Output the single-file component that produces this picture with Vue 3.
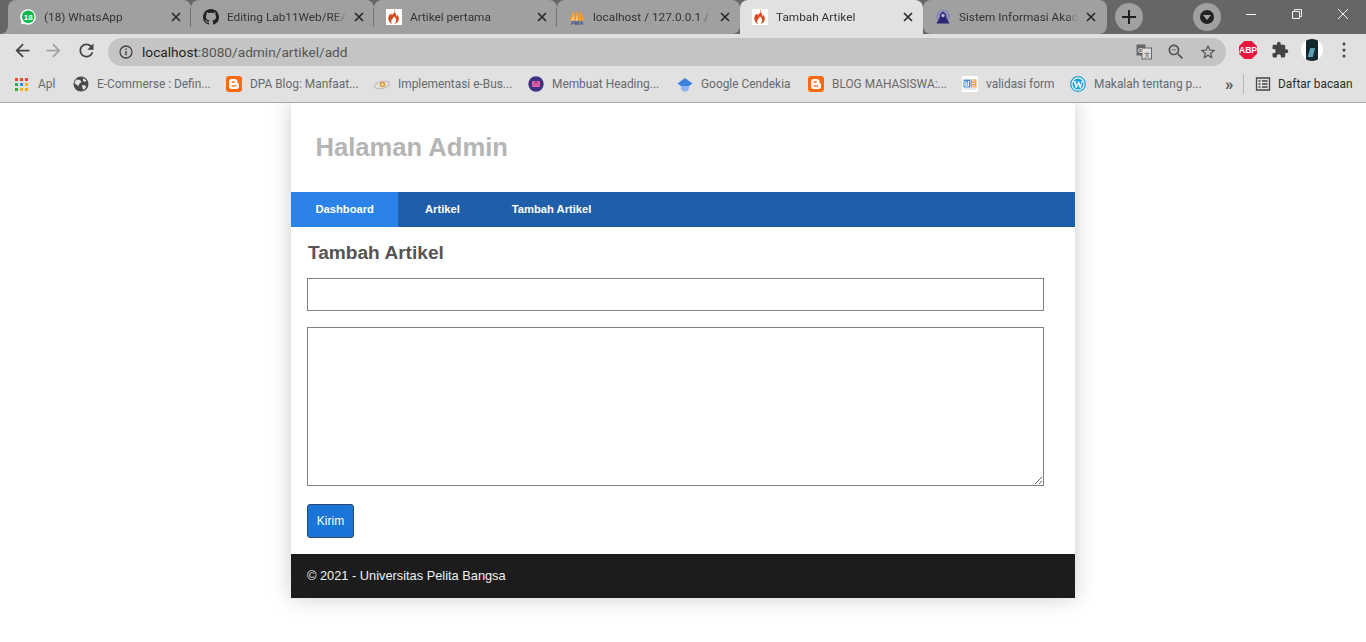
<script setup>
const icons = {
  wa: '<circle cx="8" cy="8" r="7.800" fill="#fff"/><path d="M.8 15.500l1.200-4.600 3.200 3.300z" fill="#fff"/><circle cx="8.200" cy="7.800" r="6.300" fill="#12b74f"/><text x="8.200" y="10.700" text-anchor="middle" font-family="Liberation Sans" font-size="8" font-weight="700" fill="#fff">18</text>',
  gh: '<path fill="#222" d="M8 0C3.580 0 0 3.580 0 8c0 3.540 2.290 6.530 5.470 7.590.4.070.55-.17.55-.38 0-.19-.01-.82-.01-1.490-2.010.37-2.530-.49-2.690-.94-.09-.23-.48-.94-.82-1.130-.28-.15-.68-.52-.01-.53.63-.01 1.080.58 1.230.82.72 1.210 1.870.87 2.330.66.070-.52.28-.87.51-1.070-1.780-.2-3.640-.89-3.640-3.950 0-.87.31-1.590.82-2.150-.08-.2-.36-1.020.08-2.120 0 0 .67-.21 2.200.82.64-.18 1.320-.27 2-.27.68 0 1.360.09 2 .27 1.530-1.040 2.200-.82 2.200-.82.44 1.100.16 1.920.08 2.120.51.56.82 1.270.82 2.150 0 3.070-1.870 3.750-3.650 3.950.29.25.54.73.54 1.480 0 1.070-.01 1.930-.01 2.200 0 .21.15.46.55.38A8.013 8.013 0 0016 8c0-4.420-3.580-8-8-8z"/>',
  ci: '<rect width="16" height="16" fill="#fff"/><path fill="#d8481c" d="M9 .8c.7 2.600-2 3.800-3.200 5.600-.4-.7-.5-1.300-.3-2.100C3.500 5.400 2 7.500 2.300 10c.3 2.300 1.800 4.100 4 5-1.300-1.500-1.500-3.100-.5-4.500.8-1 2-1.700 2-3.300 1.700 1.200 2.700 2.900 2.300 4.900-.2 1-.7 2-1.500 2.900 2.400-.6 4.100-2.500 4.200-5 .1-2.300-1.200-3.700-1.900-4.400.1 1-.3 1.700-.8 2.100.2-2.300-.6-4.400-2.100-5.900z"/>',
  pma: '<path fill="#f59a23" d="M.5 11.500L4.500 1.500 6 11.500zM5.500 11.500L8.200.8 10 11.500zM9.600 11.500L11 1.500 15.800 11.500z"/><path fill="#fcd092" d="M2.500 11.500L4.500 5 5 11.500zM6.800 11.500L8.200 4.500 8.800 11.500z"/><text x="8" y="16" text-anchor="middle" font-family="Liberation Sans" font-size="5.500" font-weight="700" font-style="italic" fill="#3d4d80">PMA</text>',
  sia: '<circle cx="8" cy="7.500" r="7" fill="#8d8bb5"/><path fill="#2a2674" d="M8 2.500l3 3v2.500l3.500 6.500h-13L5 8V5.500z"/><circle cx="8" cy="6.500" r="1.700" fill="#b9b7d4"/>',
  globe: '<circle cx="8" cy="8" r="7.500" fill="#4a4a4a"/><path fill="#e1e1e1" d="M3 3.500l4 .5 1.500 2-2 1.500-1 2.500L3 8.500 1.500 7zM10 2l3.500 2.500L12 6l-2-1zM9 9l3.500.500.500 2-2.500 2.500-1-2z"/>',
  blog: '<rect width="16" height="16" rx="3" fill="#f96a0e"/><path fill="#fff" d="M5.500 3h3.300A2.700 2.700 0 0 1 11.500 5.700V6.500a1 1 0 0 0 1 1 .5.5 0 0 1 .5.500v2.500A2.500 2.500 0 0 1 10.500 13h-5A2.500 2.500 0 0 1 3 10.500v-5A2.500 2.500 0 0 1 5.500 3z"/><rect x="5.500" y="5.300" width="3.400" height="1.400" rx=".7" fill="#f96a0e"/><rect x="5.500" y="9.200" width="5" height="1.400" rx=".7" fill="#f96a0e"/>',
  eye: '<ellipse cx="8" cy="9" rx="7.500" ry="3.500" fill="none" stroke="#b9b9b9" stroke-width="1" transform="rotate(-14 8 9)"/><circle cx="8.500" cy="8.500" r="2.800" fill="#ee9a37"/><circle cx="8.500" cy="8.500" r="1.100" fill="#fff"/>',
  rx: '<circle cx="8" cy="8" r="7.700" fill="#41307f"/><rect x="4" y="5" width="8" height="6" rx="1" fill="#e55fa2"/><path d="M5.500 8.500h1M9.500 8.500h1M6.500 6.300h3" stroke="#41307f" stroke-width="1"/>',
  gs: '<path fill="#8ab4f8" d="M4 8h8v3.500a4 4 0 0 1-8 0z"/><path fill="#3f7fe0" d="M8 2l7.500 5.500L12 10H4L.500 7.500z"/>',
  w3: '<rect width="16" height="16" fill="#fff"/><rect x="1.500" y="3.500" width="7" height="8" fill="#3d8fd8"/><rect x="9" y="3.500" width="5.500" height="8" fill="#ee9a2e"/><path d="M3 5v5h3.500V5M4.800 6v3" fill="none" stroke="#fff" stroke-width="1"/><path d="M10 5h3.300M10 7.500h3.300M10 10h3.300" stroke="#fff" stroke-width="1"/><rect x="1.500" y="12.500" width="13" height="1" fill="#c7d5e0"/>',
  wp: '<circle cx="8" cy="8" r="7.300" fill="#fff" stroke="#1aa0dc" stroke-width="1.300"/><circle cx="8" cy="8" r="5.600" fill="#1aa0dc"/><text x="8" y="11.500" text-anchor="middle" font-family="Liberation Serif" font-size="10.500" font-weight="700" fill="#fff">W</text>'
}

const tabs = [
  { icon: 'wa', title: '(18) WhatsApp' },
  { icon: 'gh', title: 'Editing Lab11Web/REA' },
  { icon: 'ci', title: 'Artikel pertama' },
  { icon: 'pma', title: 'localhost / 127.0.0.1 / l', before: true },
  { icon: 'ci', title: 'Tambah Artikel', active: true },
  { icon: 'sia', title: 'Sistem Informasi Akad', last: true }
]

const bookmarks = [
  { icon: 'globe', label: 'E-Commerse : Defin...', width: 153 },
  { icon: 'blog', label: 'DPA Blog: Manfaat...', width: 148 },
  { icon: 'eye', label: 'Implementasi e-Bus...', width: 154 },
  { icon: 'rx', label: 'Membuat Heading...', width: 149 },
  { icon: 'gs', label: 'Google Cendekia', width: 131 },
  { icon: 'blog', label: 'BLOG MAHASISWA:...', width: 154 },
  { icon: 'w3', label: 'validasi form', width: 108 },
  { icon: 'wp', label: 'Makalah tentang p...', width: 150 }
]

const appColors = ['#e8453c', '#e8453c', '#e8453c', '#34a853', '#2d8cf0', '#fbb008', '#34a853', '#fbb008', '#fbb008']
</script>

<template>
  <div class="page">
    <div class="browser">
      <div class="strip">
        <div class="edge"><span></span></div>
        <div
          v-for="tab in tabs"
          :key="tab.title"
          class="tab"
          :class="{ active: tab.active, before: tab.before, last: tab.last }"
        >
          <svg class="fav" viewBox="0 0 16 16" v-html="icons[tab.icon]"></svg>
          <span class="tab-title">{{ tab.title }}</span>
          <svg class="tab-x" viewBox="0 0 10 10"><path d="M1 1l8 8M9 1l-8 8" /></svg>
        </div>
        <button class="new-tab" type="button">
          <svg viewBox="0 0 14 14" width="14" height="14"><path d="M7 0v14M0 7h14" /></svg>
        </button>
        <div class="profile-chip"><span class="profile-dot"><i></i></span></div>
        <div class="win-ctl">
          <svg viewBox="0 0 46 28" width="46" height="28"><path d="M18 14.500h10" /></svg>
          <svg viewBox="0 0 46 28" width="46" height="28"><path d="M18.500 11.500h7v7h-7zM20.500 11.500v-2h7v7h-2" /></svg>
          <svg viewBox="0 0 46 28" width="46" height="28"><path d="M18 9l10 10M28 9L18 19" /></svg>
        </div>
      </div>

      <div class="toolbar">
        <span class="nav-btn">
          <svg viewBox="0 0 24 24" width="21" height="21"><path fill="#444" d="M20 11H7.830l5.590-5.590L12 4l-8 8 8 8 1.410-1.410L7.830 13H20v-2z" /></svg>
        </span>
        <span class="nav-btn fwd">
          <svg viewBox="0 0 24 24" width="21" height="21"><path fill="#a3a3a3" d="M4 11h12.170l-5.590-5.590L12 4l8 8-8 8-1.410-1.410L16.170 13H4v-2z" /></svg>
        </span>
        <span class="nav-btn reload">
          <svg viewBox="0 0 24 24" width="21" height="21"><path fill="#444" d="M17.650 6.350C16.200 4.900 14.210 4 12 4c-4.420 0-7.990 3.580-7.990 8s3.570 8 7.990 8c3.730 0 6.840-2.550 7.730-6h-2.080c-.82 2.330-3.040 4-5.650 4-3.310 0-6-2.690-6-6s2.690-6 6-6c1.660 0 3.140.69 4.220 1.780L13 11h7V4l-2.350 2.350z" /></svg>
        </span>
        <div class="omnibox">
          <svg class="info" viewBox="0 0 14 14" width="14" height="14">
            <circle cx="7" cy="7" r="6" fill="none" stroke="#444" stroke-width="1.300" />
            <path d="M7 6v4.200M7 3.600v1.300" stroke="#444" stroke-width="1.400" />
          </svg>
          <span class="url"><b>localhost</b>:8080/admin/artikel/add</span>
          <span class="omni-icon">
            <svg viewBox="0 0 16 16" width="16" height="16">
              <rect x="0.500" y="0.500" width="9" height="11" fill="#666" />
              <rect x="6" y="4" width="9.500" height="11" fill="#dedede" stroke="#666" />
              <text x="4.500" y="8.500" text-anchor="middle" font-family="Liberation Sans" font-size="7" font-weight="700" fill="#ddd">G</text>
              <text x="11" y="12.500" text-anchor="middle" font-family="Noto Sans CJK SC, sans-serif" font-size="6" fill="#555">文</text>
            </svg>
          </span>
          <span class="omni-icon">
            <svg viewBox="0 0 24 24" width="20" height="20"><path fill="#555" d="M15.500 14h-.79l-.28-.27C15.410 12.590 16 11.110 16 9.500 16 5.910 13.090 3 9.500 3S3 5.910 3 9.500 5.910 16 9.500 16c1.610 0 3.090-.59 4.230-1.570l.27.28v.79l5 4.990L20.490 19l-4.990-5zm-6 0C7.010 14 5 11.990 5 9.500S7.010 5 9.500 5 14 7.010 14 9.500 11.990 14 9.500 14zM7 9h5v1H7z" /></svg>
          </span>
          <span class="omni-icon">
            <svg viewBox="0 0 24 24" width="18" height="18"><path fill="#555" d="M22 9.240l-7.190-.62L12 2 9.190 8.630 2 9.240l5.460 4.730L5.820 21 12 17.270 18.180 21l-1.630-7.030L22 9.240zM12 15.400l-3.760 2.270 1-4.280-3.320-2.880 4.380-.38L12 6.100l1.710 4.040 4.380.38-3.320 2.880 1 4.280L12 15.400z" /></svg>
          </span>
        </div>
        <span class="ext">
          <svg viewBox="0 0 18 18" width="18" height="18">
            <path fill="#e8173f" d="M5.300 0h7.400L18 5.300v7.400L12.700 18H5.300L0 12.700V5.300z" />
            <text x="9" y="12.200" text-anchor="middle" font-family="Liberation Sans" font-size="8.600" font-weight="700" fill="#fff">ABP</text>
          </svg>
        </span>
        <span class="ext">
          <svg viewBox="0 0 24 24" width="18" height="18"><path fill="#444" d="M20.500 11H19V7c0-1.100-.9-2-2-2h-4V3.500C13 2.120 11.880 1 10.500 1S8 2.120 8 3.500V5H4c-1.100 0-1.990.9-1.990 2v3.800H3.500c1.490 0 2.700 1.210 2.700 2.700s-1.210 2.700-2.700 2.700H2V20c0 1.100.9 2 2 2h3.800v-1.500c0-1.490 1.210-2.700 2.700-2.700 1.490 0 2.700 1.210 2.700 2.700V22H17c1.100 0 2-.9 2-2v-4h1.500c1.380 0 2.500-1.120 2.500-2.500S21.880 11 20.500 11z" /></svg>
        </span>
        <span class="ext">
          <span class="avatar"><i></i><em></em></span>
        </span>
        <span class="ext">
          <svg viewBox="0 0 4 16" width="4" height="16"><circle cx="2" cy="2" r="1.500" fill="#444" /><circle cx="2" cy="8" r="1.500" fill="#444" /><circle cx="2" cy="14" r="1.500" fill="#444" /></svg>
        </span>
      </div>

      <div class="bookmarks">
        <div class="bm apps">
          <span class="app-grid"><i v-for="(c, i) in appColors" :key="i" :style="{ background: c }"></i></span>
          <span class="bm-label">Apl</span>
        </div>
        <div
          v-for="(b, i) in bookmarks"
          :key="i"
          class="bm"
          :style="{ width: b.width + 'px' }"
        >
          <svg class="fav" viewBox="0 0 16 16" v-html="icons[b.icon]"></svg>
          <span class="bm-label">{{ b.label }}</span>
        </div>
        <span class="more">»</span>
        <span class="bm-sep"></span>
        <svg class="list-ic" viewBox="0 0 16 16" width="16" height="16">
          <path d="M1.500 2h13v12h-13zM3.500 5h2M7 5h5.500M3.500 8h2M7 8h5.500M3.500 11h2M7 11h5.500" fill="none" stroke="#444" stroke-width="1.300" />
        </svg>
        <span class="reading">Daftar bacaan</span>
      </div>
    </div>

    <main class="sheet">
      <header class="site-head">
        <h1>Halaman Admin</h1>
      </header>
      <nav class="site-nav">
        <a class="active">Dashboard</a>
        <a>Artikel</a>
        <a>Tambah Artikel</a>
      </nav>
      <section class="content">
        <h2>Tambah Artikel</h2>
        <form class="form" @submit.prevent>
          <input type="text" class="field" />
          <textarea class="field area"></textarea>
          <button class="send" type="submit">Kirim</button>
        </form>
      </section>
      <footer class="site-foot">© 2021 - Universitas Pelita Bangsa</footer>
    </main>
  </div>
</template>

<style>
html, body { margin: 0; background: #fff; overflow: hidden; }
</style>

<style scoped>
.page { height: 642px; display: flex; flex-direction: column; overflow: hidden; background: #fff; font-family: "Liberation Sans", Arial, sans-serif; }
.browser { flex: none; position: relative; z-index: 2; font-family: Roboto, "Noto Sans", sans-serif; border-bottom: 1px solid #a8a8a8; }

.strip { display: flex; height: 34px; background: #666; }
.edge { flex: 0 0 8px; background: #a0a0a0; }
.edge span { display: block; height: 100%; background: #666; border-radius: 0 0 8px 0; }

.tab { flex: 0 0 183px; min-width: 0; box-sizing: border-box; position: relative; display: flex; align-items: center; gap: 8px; padding: 0 10px 0 12px; background: #a0a0a0; border-radius: 8px 8px 0 0; }
.tab::after { content: ""; position: absolute; right: 0; top: 8px; height: 19px; width: 1px; background: #737373; }
.tab.active { background: #e1e1e1; }
.tab.before { border-radius: 8px 8px 8px 0; }
.tab.before::after, .tab.active::after, .tab.last::after { display: none; }
.tab.last { flex-basis: 184px; border-radius: 8px; padding-right: 11px; }
.fav { flex: 0 0 16px; width: 16px; height: 16px; }
.tab-title { flex: 1; min-width: 0; overflow: hidden; white-space: nowrap; font-size: 11.800px; color: #333; -webkit-mask-image: linear-gradient(to right, #000 calc(100% - 12px), transparent); mask-image: linear-gradient(to right, #000 calc(100% - 12px), transparent); }
.tab-x { flex: 0 0 10px; width: 10px; height: 10px; }
.tab-x path { stroke: #2a2a2a; stroke-width: 1.700; fill: none; }

.new-tab { flex: 0 0 28px; height: 28px; margin: 3px 0 0 8px; padding: 0; border: 0; border-radius: 50%; background: #a0a0a0; display: flex; align-items: center; justify-content: center; }
.new-tab path { stroke: #1e1e1e; stroke-width: 2; fill: none; }
.profile-chip { flex: 0 0 28px; height: 28px; margin: 3px 0 0 50px; border-radius: 50%; background: #a0a0a0; display: flex; align-items: center; justify-content: center; }
.profile-dot { width: 14px; height: 14px; border-radius: 50%; background: #222; display: flex; align-items: center; justify-content: center; }
.profile-dot i { width: 0; height: 0; border-left: 4px solid transparent; border-right: 4px solid transparent; border-top: 5px solid #a8a8a8; margin-top: 1px; }
.win-ctl { margin-left: auto; display: flex; height: 28px; }
.win-ctl path { stroke: #f2f2f2; stroke-width: 1; fill: none; }

.toolbar { height: 32px; display: flex; align-items: center; background: #e1e1e1; padding-right: 6px; }
.nav-btn { flex: 0 0 28px; height: 28px; display: flex; align-items: center; justify-content: center; margin-left: 8px; }
.nav-btn.fwd { margin-left: 3px; }
.nav-btn.reload { margin-left: 5px; }
.omnibox { flex: 1; margin: 4px 6px 0 8px; height: 28px; align-self: flex-start; border-radius: 14px; background: #c4c4c4; display: flex; align-items: center; padding: 0 2px 0 11px; }
.info { flex: none; }
.url { flex: 1; margin-left: 9px; font-size: 13.700px; color: #555; white-space: nowrap; }
.url b { font-weight: 400; color: #1f1f1f; }
.omni-icon { flex: 0 0 32px; height: 28px; display: flex; align-items: center; justify-content: center; }
.ext { flex: 0 0 32px; height: 32px; display: flex; align-items: center; justify-content: center; }
.avatar { position: relative; width: 22px; height: 22px; border-radius: 50%; background: #fff; overflow: hidden; display: block; }
.avatar i { position: absolute; left: 5px; top: 0; width: 12px; height: 22px; background: #12272e; }
.avatar em { position: absolute; left: 8px; top: 9px; width: 5px; height: 9px; background: #5a9fb3; transform: skewX(-15deg); }

.bookmarks { height: 36px; display: flex; align-items: center; background: #e1e1e1; padding-left: 15px; font-size: 11.900px; color: #666a6e; }
.bm { flex: none; box-sizing: border-box; display: flex; align-items: center; gap: 8px; white-space: nowrap; }
.bm.apps { width: 58px; gap: 10px; }
.app-grid { display: grid; grid-template-columns: repeat(3, 3px); grid-auto-rows: 3px; gap: 2px; width: 13px; padding: 1px 0; }
.app-grid i { display: block; }
.bm-label { white-space: nowrap; }
.more { flex: 0 0 auto; margin-left: 5px; font-size: 17px; line-height: 1; font-weight: 700; color: #555; width: 18px; }
.bm-sep { width: 1px; height: 20px; background: #b4b4b4; flex: none; }
.list-ic { flex: none; margin-left: 11px; }
.reading { margin-left: 7px; color: #2c2c2c; white-space: nowrap; }

.sheet { width: 784px; height: 495px; flex: none; margin: 0 auto; background: #fff; box-shadow: 0 0 20px rgba(0, 0, 0, .2); display: flex; flex-direction: column; }
.site-head { height: 89px; box-sizing: border-box; padding: 28px 24.500px 0; }
h1 { margin: 0; font-size: 25.600px; line-height: 32px; font-weight: 700; color: #b5b5b5; }
.site-nav { height: 35px; display: flex; background: #1f5fa9; }
.site-nav a { display: block; padding: 0 25px 0 27px; line-height: 35px; font-size: 11.200px; font-weight: 700; color: #fff; }
.site-nav a.active { box-sizing: border-box; width: 107px; padding: 0 0 0 24.500px; background: #2b83ea; }
.content { flex: 1; padding: 0 16px; }
h2 { margin: 14px 0 14px 1px; font-size: 19.100px; line-height: 23px; font-weight: 700; color: #555; }
.form { display: flex; flex-direction: column; align-items: flex-start; }
.field { box-sizing: border-box; display: block; width: 737px; height: 33px; margin: 0 0 16px; padding: 0 8px; background: #fff; border: 1px solid #808080; border-radius: 0; outline: 0; font: 13px "Liberation Sans", sans-serif; }
.area { height: 159px; margin-bottom: 18px; }
.send { box-sizing: border-box; width: 47px; height: 34px; padding: 0; background: #1b75d8; border: 1px solid #2a4a6c; border-radius: 3px; color: #fff; font: 12px "Liberation Sans", sans-serif; }
.site-foot { height: 44px; box-sizing: border-box; padding: 0 16px; line-height: 43px; background: #1c1c1c; color: #f2f2f2; font-size: 12.800px; white-space: nowrap; }
</style>
